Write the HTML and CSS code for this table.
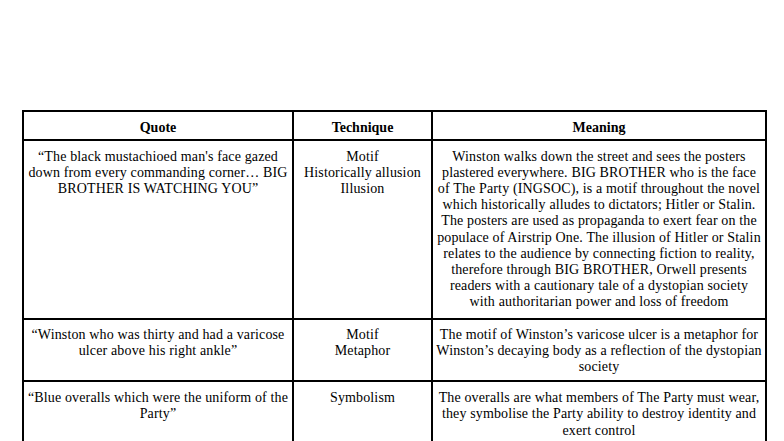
FILE: index.html
```html
<!DOCTYPE html>
<html>
<head>
<meta charset="utf-8">
<link rel="stylesheet" href="styles.css">
</head>
<body>
<div class="page">
<table class="grid">
  <colgroup>
    <col class="c-quote">
    <col class="c-tech">
    <col class="c-mean">
  </colgroup>
  <thead>
    <tr>
      <th>Quote</th>
      <th>Technique</th>
      <th>Meaning</th>
    </tr>
  </thead>
  <tbody>
    <tr class="row-first">
      <td>“The black mustachioed man's face gazed<br>down from every commanding corner… BIG<br>BROTHER IS WATCHING YOU”</td>
      <td>Motif<br>Historically allusion<br>Illusion</td>
      <td>Winston walks down the street and sees the posters<br>plastered everywhere. BIG BROTHER who is the face<br>of The Party (INGSOC), is a motif throughout the novel<br>which historically alludes to dictators; Hitler or Stalin.<br>The posters are used as propaganda to exert fear on the<br>populace of Airstrip One. The illusion of Hitler or Stalin<br>relates to the audience by connecting fiction to reality,<br>therefore through BIG BROTHER, Orwell presents<br>readers with a cautionary tale of a dystopian society<br>with authoritarian power and loss of freedom</td>
    </tr>
    <tr class="row-mid">
      <td>“Winston who was thirty and had a varicose<br>ulcer above his right ankle”</td>
      <td>Motif<br>Metaphor</td>
      <td>The motif of Winston’s varicose ulcer is a metaphor for<br>Winston’s decaying body as a reflection of the dystopian<br>society</td>
    </tr>
    <tr class="row-last">
      <td>“Blue overalls which were the uniform of the<br>Party”</td>
      <td>Symbolism</td>
      <td>The overalls are what members of The Party must wear,<br>they symbolise the Party ability to destroy identity and<br>exert control</td>
    </tr>
  </tbody>
</table>
</div>
</body>
</html>
```

FILE: styles.css
```css
html, body {
  margin: 0;
  padding: 0;
  background: #ffffff;
  font-family: "Liberation Serif", serif;
}
.page {
  padding: 110px 0 0 22px;
  height: 331px;
  overflow: hidden;
}
.grid {
  border-collapse: collapse;
  width: 743px;
  table-layout: fixed;
  font-family: "Liberation Serif", serif;
  font-size: 14px;
  line-height: 16.1px;
  color: #000;
}
.c-quote { width: 270px; }
.c-tech { width: 139px; }
.c-mean { width: 334px; }
.grid th, .grid td {
  border: 2px solid #000;
  text-align: center;
  vertical-align: top;
  white-space: nowrap;
}
.grid th {
  font-weight: bold;
  padding: 8px 2px 3px;
}
.grid td {
  padding: 8px 2px 8px;
  letter-spacing: 0.14px;
}
.grid .row-mid td {
  padding: 7px 2px 5px;
}
```
